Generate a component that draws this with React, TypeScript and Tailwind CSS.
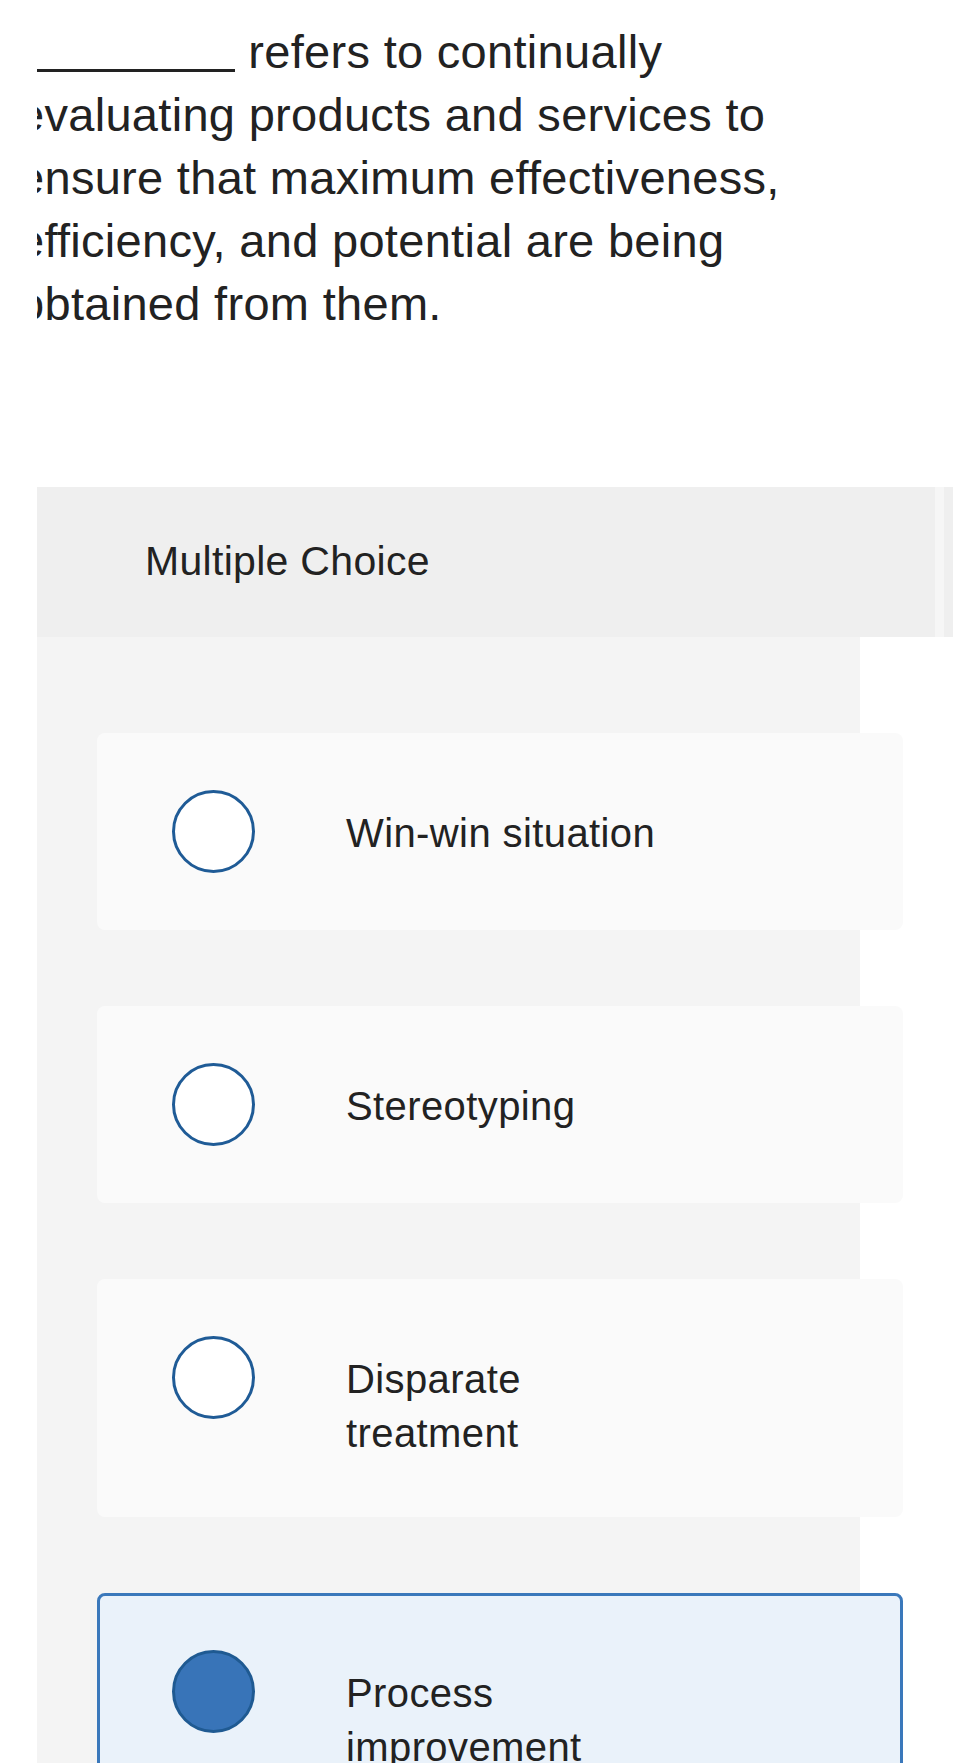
import React from 'react';

type Choice = {
  label: string;
  selected?: boolean;
};

const CHOICES: Choice[] = [
  { label: 'Win-win situation' },
  { label: 'Stereotyping' },
  { label: 'Disparate treatment' },
  { label: 'Process improvement', selected: true },
];

function Radio({ checked }: { checked?: boolean }) {
  return (
    <span
      className={
        checked
          ? 'block w-[83px] h-[83px] shrink-0 rounded-full border-[3px] border-[#1f5a92] bg-[#3874b8]'
          : 'block w-[83px] h-[83px] shrink-0 rounded-full border-[3px] border-[#1f5b96] bg-white'
      }
    />
  );
}

function ChoiceCard({ choice }: { choice: Choice }) {
  return (
    <div
      className={
        choice.selected
          ? 'w-[806px] flex items-start rounded-lg border-[3px] border-[#3a78bb] bg-[#eaf2fa] pl-[72px] py-[54px]'
          : 'w-[806px] flex items-start rounded-lg border-[3px] border-transparent bg-[#fafafa] pl-[72px] py-[54px]'
      }
    >
      <Radio checked={choice.selected} />
      <span className="ml-[91px] mt-[16px] w-[340px] text-[40px] leading-[54px] tracking-[0.4px] text-[#222]">
        {choice.label}
      </span>
    </div>
  );
}

export default function App() {
  return (
    <div
      className="min-h-screen bg-white pl-[37px] pt-[20px] overflow-hidden"
      style={{ fontFamily: '"Liberation Sans", Arial, sans-serif' }}
    >
      {/* question stem, clipped on the left */}
      <div className="overflow-hidden">
        <p className="-ml-[19px] w-[800px] text-[47px] leading-[63px] tracking-[0.3px] text-[#222]">
          <span className="inline-block w-[217px] -mb-[4px] border-b-[3px] border-[#222]" /> refers to
          continually evaluating products and services to ensure that maximum effectiveness, efficiency, and
          potential are being obtained from them.
        </p>
      </div>

      {/* multiple choice panel */}
      <div className="mt-[152px]">
        <div className="flex h-[150px]">
          <div className="w-[898px] flex items-center pl-[108px] bg-[#efefef] text-[41px] tracking-[0.3px] text-[#222]">
            Multiple Choice
          </div>
          <div className="w-[9px] bg-[#f6f6f6]" />
          <div className="w-[9px] bg-[#efefef]" />
        </div>
        <div className="w-[823px] bg-[#f4f4f4] pl-[60px] pt-[96px] pb-[76px] flex flex-col gap-[76px]">
          {CHOICES.map((c) => (
            <ChoiceCard key={c.label} choice={c} />
          ))}
        </div>
      </div>
    </div>
  );
}
